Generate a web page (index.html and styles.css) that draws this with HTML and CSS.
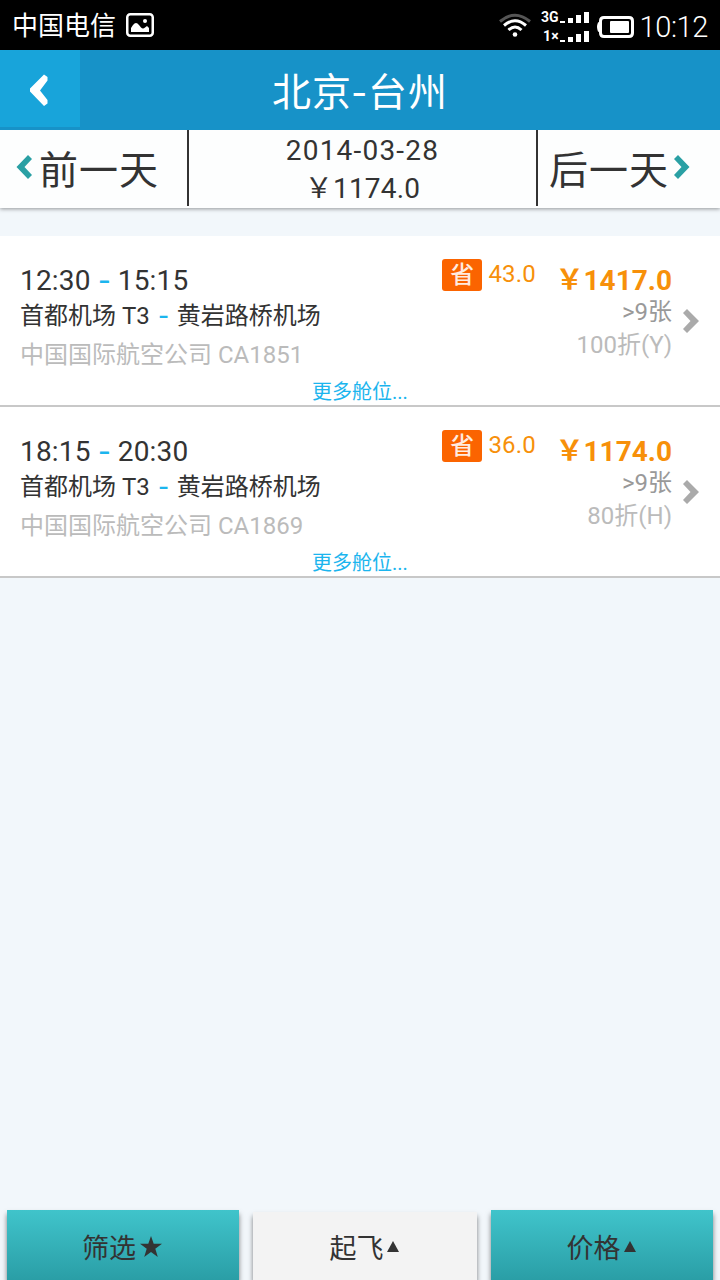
FILE: index.html
```html
<!DOCTYPE html>
<html lang="zh-CN">
<head>
  <meta charset="UTF-8">
  <title>北京-台州</title>
  <meta name="viewport" content="width=device-width, initial-scale=1">
  <link rel="stylesheet" href="styles.css">
</head>
<body>
  <div class="status">
    <span class="carrier">中国电信</span>
    <svg class="pic" width="28" height="24" viewBox="0 0 28 24">
      <rect x="1.25" y="1.25" width="25.5" height="21.5" rx="3" fill="none" stroke="#fff" stroke-width="2.5"/>
      <path d="M5 19v-4l2-3q3-4 6 0l2 2.500q2 2 4 0l2-1.500 2 2v4z" fill="#fff"/>
      <circle cx="19" cy="8" r="2" fill="#fff"/>
    </svg>
    <svg class="wifi" width="32" height="26" viewBox="0 0 32 26" fill="none" stroke="#fff" stroke-width="3">
      <path d="M1 8.500Q16-4 31 8.500" stroke="#555"/>
      <path d="M5 12.500Q16 3 27 12.500"/>
      <path d="M9.500 17Q16 11 22.500 17"/>
      <circle cx="16" cy="21.500" r="2.300" fill="#fff" stroke="none"/>
    </svg>
    <div class="signals">
      <div class="signal"><span>3G</span><i class="s1"></i><i class="s2"></i><i class="s3"></i><i class="s4"></i></div>
      <div class="signal"><span>1×</span><i class="s1"></i><i class="s2"></i><i class="s3"></i><i class="s4"></i></div>
    </div>
    <svg class="battery" width="38" height="22" viewBox="0 0 38 22">
      <path d="M8 1.500h25q3.500 0 3.500 3.500v12q0 3.500-3.500 3.500H8Q4.500 20.500 4.500 17V5Q4.500 1.500 8 1.500z" fill="none" stroke="#fff" stroke-width="3"/>
      <path d="M5 5L2 6.500Q0 11 2 15.500L5 17z" fill="#fff"/>
      <rect x="14" y="5" width="19" height="12" rx="1" fill="#fff"/>
    </svg>
    <span class="clock">10:12</span>
  </div>

  <div class="header">
    <a class="back" href="#">
      <svg width="20" height="34" viewBox="0 0 20 34">
        <path d="M16 1.500L19.500 4V7.500L12 17.500 19.500 27V30.500L16 33 2 18.500V15.500z" fill="#fff"/>
      </svg>
    </a>
    <h1>北京<span>-</span>台州</h1>
  </div>

  <div class="days">
    <a class="day prev" href="#">
      <svg width="16" height="24" viewBox="0 0 16 24"><path d="M12 0L16 4 8.500 12 16 20 12 24 .5 12z" fill="#2aa0a4"/></svg>
      <span>前一天</span>
    </a>
    <div class="today">
      <div>2014-03-28</div>
      <div class="lowest">￥1174.0</div>
    </div>
    <a class="day next" href="#">
      <span>后一天</span>
      <svg width="16" height="24" viewBox="0 0 16 24"><path d="M4 0L0 4 7.500 12 0 20 4 24 15.500 12z" fill="#2aa0a4"/></svg>
    </a>
  </div>

  <div class="list">
    <div class="flight">
      <div class="main">
        <div class="info">
          <div class="time">12:30<b>-</b>15:15</div>
          <div class="route">首都机场 T3<b>-</b>黄岩路桥机场</div>
          <div class="airline">中国国际航空公司 CA1851</div>
        </div>
        <div class="save"><span class="tag">省</span>43.0</div>
        <div class="fare">
          <div class="price">￥1417.0</div>
          <div class="left">&gt;9张</div>
          <div class="cabin">100折(Y)</div>
        </div>
        <svg class="arrow" width="16" height="24" viewBox="0 0 16 24"><path d="M4 0L0 4 7.500 12 0 20 4 24 16 12z" fill="#aaa"/></svg>
      </div>
      <a class="more" href="#">更多舱位...</a>
    </div>

    <div class="flight">
      <div class="main">
        <div class="info">
          <div class="time">18:15<b>-</b>20:30</div>
          <div class="route">首都机场 T3<b>-</b>黄岩路桥机场</div>
          <div class="airline">中国国际航空公司 CA1869</div>
        </div>
        <div class="save"><span class="tag">省</span>36.0</div>
        <div class="fare">
          <div class="price">￥1174.0</div>
          <div class="left">&gt;9张</div>
          <div class="cabin">80折(H)</div>
        </div>
        <svg class="arrow" width="16" height="24" viewBox="0 0 16 24"><path d="M4 0L0 4 7.500 12 0 20 4 24 16 12z" fill="#aaa"/></svg>
      </div>
      <a class="more" href="#">更多舱位...</a>
    </div>
  </div>

  <div class="footer">
    <a class="tab" href="#">筛选<svg class="star" width="22" height="21" viewBox="0 0 22 21"><path d="M11 0l2.700 7.800H22l-6.700 5 2.500 8.200L11 16l-6.800 5 2.500-8.200L0 7.800h8.300z" fill="#333"/></svg></a>
    <a class="tab plain" href="#">起飞<i class="up"></i></a>
    <a class="tab" href="#">价格<i class="up"></i></a>
  </div>
</body>
</html>
```
FILE: styles.css
```css
* {
  box-sizing: border-box;
}

body {
  margin: 0;
  height: 1280px;
  display: flex;
  flex-direction: column;
  overflow: hidden;
  background: #f2f7fb;
  color: #333;
  font-family: Roboto, "Noto Sans CJK SC", sans-serif;
}

a {
  color: inherit;
  text-decoration: none;
}

/* status bar */
.status {
  height: 50px;
  display: flex;
  align-items: center;
  padding: 0 12px;
  background: #000;
  color: #fff;
}

.carrier {
  font-size: 26px;
  line-height: 50px;
  padding-top: 1px;
}

.pic {
  margin-left: 10px;
}

.wifi {
  margin: 2px 0 0 auto;
}

.signals {
  margin-left: 9px;
  width: 49px;
}

.signal {
  display: flex;
  align-items: flex-end;
  justify-content: flex-end;
  gap: 3px;
  height: 12px;
  margin: 3px 0 7px;
}

.signals .signal:last-child {
  margin-bottom: 0;
}

.signal span {
  margin-right: -2px;
  font-size: 14px;
  font-weight: bold;
  line-height: 12px;
}

.signal i {
  width: 5px;
  background: #fff;
}

.signal .s1 { height: 2px; }
.signal .s2 { height: 5px; }
.signal .s3 { height: 8px; }
.signal .s4 { height: 11px; }

.battery {
  margin: 3px 1px 0 7px;
}

.clock {
  margin: 3px 0 0 5px;
  font-size: 29px;
  font-weight: 300;
  letter-spacing: -0.4px;
}

/* title */
.header {
  position: relative;
  height: 80px;
  background: #1792c8;
}

.back {
  position: absolute;
  left: 0;
  top: 0;
  width: 80px;
  height: 77px;
  padding: 23px 0 0 28px;
  background: #18a4da;
}

h1 {
  margin: 0;
  color: #fff;
  font-size: 39px;
  font-weight: normal;
  line-height: 86px;
  letter-spacing: 1px;
  text-align: center;
}

h1 span {
  display: inline-block;
  transform: scaleX(1.2);
  margin: 0 2px;
}

/* date switch */
.days {
  display: flex;
  height: 78px;
  padding-bottom: 2px;
  background: #fdfefe;
  box-shadow: 0 1px 4px rgba(0, 0, 0, 0.4);
}

.day {
  display: flex;
  align-items: center;
  font-size: 39px;
  letter-spacing: 1px;
}

.day span {
  margin-top: -3px;
}

.prev {
  width: 189px;
  padding-left: 16px;
  gap: 7px;
  border-right: 2px solid #333;
}

.next {
  width: 184px;
  padding-left: 11px;
  gap: 5px;
  border-left: 2px solid #333;
}

.day svg {
  margin-bottom: 2px;
}

.today {
  flex: 1;
  padding-top: 2px;
  font-size: 28px;
  line-height: 38px;
  letter-spacing: 1.2px;
  text-align: center;
}

.lowest {
  letter-spacing: 0.2px;
}

/* flights */
.list {
  flex: 1;
  padding-top: 28px;
}

.flight {
  height: 171px;
  padding-top: 26px;
  background: #fff;
  border-bottom: 2px solid #c8c8c8;
}

.main {
  display: flex;
  height: 115px;
  padding: 0 21px 0 20px;
}

.info {
  flex: 1;
  padding-top: 1px;
}

.info b {
  display: inline-block;
  width: 27px;
  color: #1bb5ee;
  font-weight: 500;
  letter-spacing: 0;
  text-align: center;
  transform: scaleX(1.25);
}

.time {
  font-size: 28px;
  line-height: 36px;
  letter-spacing: 0.2px;
}

.route {
  font-size: 24px;
  line-height: 35px;
}

.airline {
  padding-top: 1px;
  color: #bbb;
  font-size: 24px;
  line-height: 40px;
}

.save {
  display: flex;
  align-items: center;
  height: 32px;
  margin-top: -3px;
  color: #f7900a;
  font-size: 24px;
  line-height: 30px;
  padding-bottom: 2px;
  letter-spacing: 0.2px;
}

.tag {
  width: 40px;
  height: 32px;
  margin: 2px 6px 0 0;
  border-radius: 3px;
  background: #fb6400;
  color: #ffece0;
  font-size: 24px;
  font-weight: 500;
  line-height: 33px;
  text-align: center;
}

.fare {
  width: 136px;
  text-align: right;
  font-size: 24px;
  line-height: 33px;
}

.price {
  padding-top: 2px;
  color: #f7900a;
  font-size: 28px;
  font-weight: bold;
  line-height: 34px;
  white-space: nowrap;
}

.left {
  margin-top: -2px;
  color: #999;
}

.cabin {
  color: #bbb;
}

.arrow {
  margin: 47px 0 0 11px;
}

.more {
  display: block;
  color: #1bb5ee;
  font-size: 20px;
  line-height: 31px;
  text-align: center;
}

/* bottom tabs */
.footer {
  display: flex;
  height: 70px;
  padding: 0 7px;
}

.tab {
  display: flex;
  align-items: center;
  justify-content: center;
  width: 232px;
  padding: 3px 2px 0 0;
  background: linear-gradient(#40c4cb, #2a9ea6);
  box-shadow: 0 4px 5px rgba(0, 0, 0, 0.5);
  font-size: 27px;
}

.plain {
  width: 224px;
  margin: 2px 14px 0;
  padding-top: 1px;
  background: #f3f3f3;
}

.tab:last-child {
  width: 222px;
}

.star {
  margin-left: 4px;
}

.up {
  margin-left: 3px;
  border: 6px solid transparent;
  border-top: 0;
  border-bottom: 11px solid #333;
}
```
